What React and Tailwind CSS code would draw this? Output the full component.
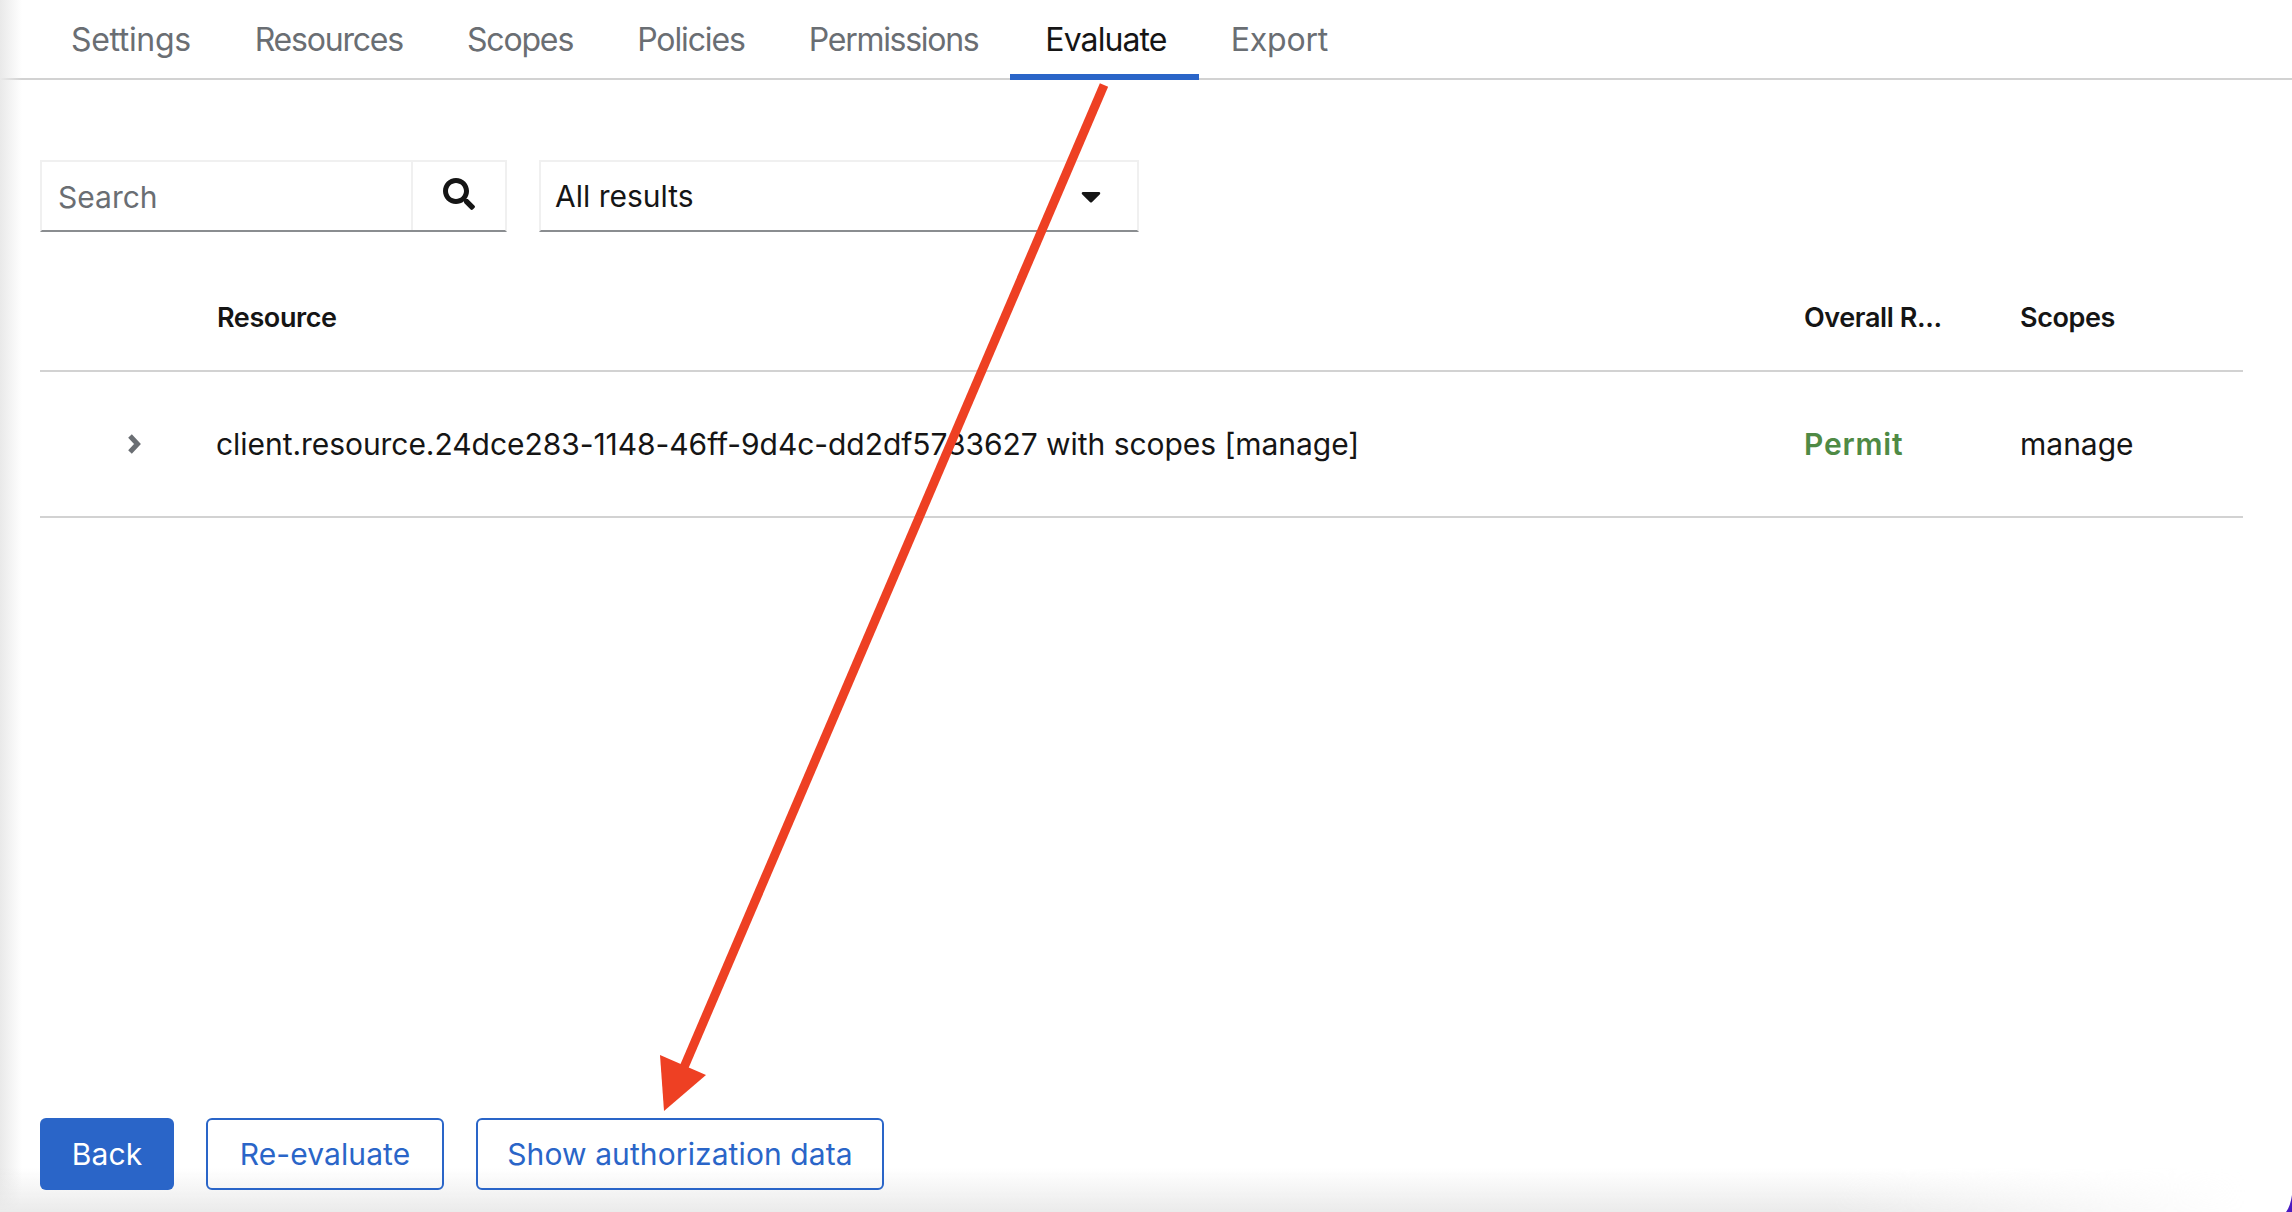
import { FaSearch, FaCaretDown } from 'react-icons/fa';

const tabs = [
  { label: 'Settings', tracking: 'tracking-[-0.35px]' },
  { label: 'Resources', tracking: 'tracking-[-1.22px]' },
  { label: 'Scopes', tracking: 'tracking-[-1.15px]' },
  { label: 'Policies', tracking: 'tracking-[-1.1px]' },
  { label: 'Permissions', tracking: 'tracking-[-1.3px]' },
  { label: 'Evaluate', tracking: 'tracking-[-0.9px]' },
  { label: 'Export', tracking: 'tracking-[-0.17px]' },
];

export default function App() {
  return (
    <div className="relative flex h-[1212px] w-[2292px] flex-col overflow-hidden bg-white font-['Inter',sans-serif] text-[#151515]">
      <nav className="flex h-[80px] items-stretch border-b-2 border-[#d2d2d2] pl-[39px]">
        {tabs.map((tab) => (
          <div
            key={tab.label}
            className={
              tab.label === 'Evaluate'
                ? `mb-[-2px] flex items-center border-b-[6px] border-[#2a65c8] pl-[35px] pr-[32px] pt-[6px] text-[32px] text-[#151515] ${tab.tracking}`
                : `flex items-center px-[32px] pt-[2px] text-[32px] text-[#6a6e73] ${tab.tracking}`
            }
          >
            {tab.label}
          </div>
        ))}
      </nav>

      <div className="mt-[80px] flex gap-[32px] pl-[40px]">
        <div className="flex h-[72px] w-[467px] border-2 border-[#f0f0f0] border-b-[#8a8d90]">
          <div className="flex flex-1 items-center border-r-2 border-[#f0f0f0] pl-[16px] pt-[2px] text-[30px] text-[#6a6e73]">Search</div>
          <div className="flex w-[92px] items-center justify-center pb-[4px]">
            <FaSearch size={32} className="text-[#151515]" />
          </div>
        </div>
        <div className="flex h-[72px] w-[600px] items-center justify-between border-2 border-[#f0f0f0] border-b-[#8a8d90] pl-[14px] pr-[30px]">
          <span className="text-[30px]">All results</span>
          <FaCaretDown size={32} className="text-[#151515]" />
        </div>
      </div>

      <div className="ml-[40px] mr-[49px] mt-[30px]">
        <div className="flex h-[110px] items-center border-b-2 border-[#d2d2d2] pt-[4px] text-[27px] font-semibold tracking-[-0.4px]">
          <div className="w-[177px]" />
          <div className="flex-1">Resource</div>
          <div className="w-[216px]">Overall R...</div>
          <div className="w-[223px]">Scopes</div>
        </div>
        <div className="flex h-[146px] items-center border-b-2 border-[#d2d2d2] text-[30px]">
          <div className="flex w-[177px] items-center pl-[87px]">
            <svg width="14" height="22" viewBox="0 0 14 22" fill="none">
              <polyline points="3,3 10.5,11 3,19" stroke="#6a6e73" strokeWidth="5" />
            </svg>
          </div>
          <div className="flex-1 -translate-x-[1px] tracking-[-0.05px]">client.resource.24dce283-1148-46ff-9d4c-dd2df5783627 with scopes [manage]</div>
          <div className="w-[216px] font-semibold tracking-[0.8px] text-[#4f8a45]">Permit</div>
          <div className="w-[223px]">manage</div>
        </div>
      </div>

      <div className="relative z-10 mt-auto flex gap-[32px] pb-[22px] pl-[40px] text-[30px] tracking-[0.1px]">
        <button type="button" className="h-[72px] w-[134px] rounded-[6px] bg-[#2a65c8] text-white">Back</button>
        <button type="button" className="h-[72px] w-[238px] rounded-[6px] border-2 border-[#2a65c8] text-[#2a65c8]">Re-evaluate</button>
        <button type="button" className="h-[72px] w-[408px] rounded-[6px] border-2 border-[#2a65c8] text-[#2a65c8]">Show authorization data</button>
      </div>

      {/* window shadow along the left and bottom edges */}
      <div className="pointer-events-none absolute inset-y-0 left-0 w-[22px] bg-gradient-to-r from-[#e9e9e9] to-transparent" />
      <div className="pointer-events-none absolute inset-x-0 bottom-0 h-[44px] bg-gradient-to-t from-[#ebebeb] to-transparent [mask-image:linear-gradient(to_right,black_80%,transparent_98%)]" />

      {/* annotation arrow */}
      <svg className="pointer-events-none absolute left-0 top-0 z-20" width="2292" height="1212" viewBox="0 0 2292 1212" fill="none">
        <line x1="1104" y1="85" x2="682" y2="1072" stroke="#ee4023" strokeWidth="9" />
        <polygon points="660,1055 706,1075 664,1111" fill="#ee4023" />
        <path d="M2292 1195 C2291 1202 2289 1208 2286 1212 L2292 1212 Z" fill="#4a1bc0" />
      </svg>
    </div>
  );
}
